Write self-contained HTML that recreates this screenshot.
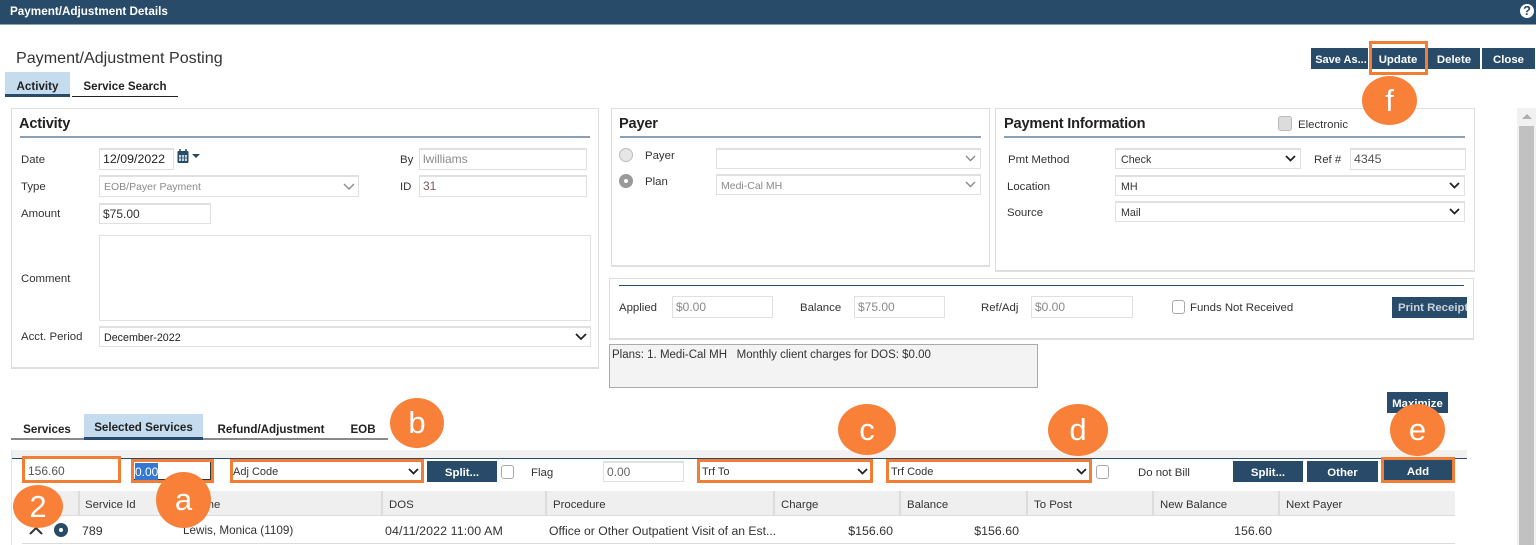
<!DOCTYPE html>
<html lang="en"><head><meta charset="utf-8"><title>Payment/Adjustment Details</title>
<style>
html,body{margin:0;padding:0;background:#fff;}
body{width:1536px;height:545px;position:relative;overflow:hidden;font-family:"Liberation Sans",sans-serif;font-size:11.4px;color:#333;}
div,span.t{position:absolute;box-sizing:border-box;white-space:nowrap;}
.t{line-height:18px;height:18px;}
.box{border:1px solid #dedede;border-bottom-width:2px;background:#fff;}
.h{font-size:14.6px;font-weight:bold;color:#222;line-height:20px;height:20px;letter-spacing:-.2px;}
.rule{height:2px;background:#8ba0b3;}
.in{border:1px solid #e0e0e0;border-top-width:2px;background:#fff;line-height:19px;padding-left:3px;color:#333;overflow:hidden;font-size:12px;}
.dis{color:#8a8a8a;}
.sel{font-size:10.7px;padding-left:4px;line-height:20px;}
.btn{background:#274b69;color:#fff;font-weight:bold;text-align:center;line-height:24px;height:21px;overflow:hidden;}
.o{border:3px solid #f27e36;}
.os{font-size:11px;line-height:21px;}
.c{background:#f98038;border-radius:50%;color:#fff;font-size:31px;text-align:center;font-family:"Liberation Sans",sans-serif;}
.tab{font-weight:bold;color:#222;text-align:center;font-size:11.6px;}
.th{height:25px;top:491px;border-left:2px solid #dcdcdc;}
.cb{border:1px solid #aaa;border-radius:3px;width:13px;height:14px;background:#fff;}
svg{position:absolute;overflow:visible;}
.hd{top:496px;color:#333;}
.td{top:522px;color:#333;font-size:11.7px;}
.num{font-size:12.4px;}
</style></head><body>

<div style="left:0;top:0;width:1536px;height:25px;background:#274b69;border-bottom:1px solid #8ba0b3"></div>
<div class="t" style="left:10px;top:3px;color:#fff;font-weight:bold;font-size:11.7px">Payment/Adjustment Details</div>
<div style="left:1520px;top:4px;width:14px;height:14px;border-radius:50%;background:#fff;color:#274b69;font-weight:bold;font-size:13px;line-height:14px;text-align:center">?</div>

<div class="t" style="left:16px;top:49px;font-size:16.1px;line-height:18px;height:18px;color:#333">Payment/Adjustment Posting</div>

<div class="btn" style="left:1311px;top:48px;width:57px;padding-left:3px;font-size:11px">Save As...</div>
<div class="btn" style="left:1370px;top:48px;width:56px">Update</div>
<div class="btn" style="left:1428px;top:48px;width:52px">Delete</div>
<div class="btn" style="left:1482px;top:48px;width:53px">Close</div>
<div class="o" style="left:1369px;top:41px;width:59px;height:34px"></div>

<div style="left:5px;top:72px;width:65px;height:25px;background:#c5dcee;border-bottom:3px solid #274b69"></div>
<div class="t tab" style="left:5px;top:78px;width:65px">Activity</div>
<div style="left:72px;top:96px;width:106px;height:1px;background:#222"></div>
<div class="t tab" style="left:72px;top:78px;width:106px">Service Search</div>

<div style="left:1517px;top:108px;width:19px;height:18px;background:#f1f1f1"></div>
<div style="left:1522px;top:114px;width:0;height:0;border:5px solid transparent;border-top:0;border-bottom:5px solid #b0b0b0"></div>
<div style="left:1517px;top:126px;width:19px;height:419px;background:#f1f1f1"></div>
<div style="left:1519px;top:126px;width:15px;height:419px;background:#c1c1c1"></div>

<!-- Activity -->
<div class="box" style="left:11px;top:108px;width:588px;height:261px"></div>
<div class="h" style="left:19px;top:114px">Activity</div>
<div class="rule" style="left:20px;top:136px;width:570px"></div>
<div class="t" style="left:21px;top:151px">Date</div>
<div class="in num" style="left:99px;top:148px;width:75px;height:22px;color:#222">12/09/2022</div>
<svg style="left:177px;top:149px" width="13" height="15" viewBox="0 0 13 15"><path d="M3 0v3M9 0v3" stroke="#274b69" stroke-width="1.5"/><rect x=".5" y="2" width="11" height="12" rx="1" fill="#274b69"/><rect x="2" y="6" width="8" height="6" fill="#c7d3dd"/><path d="M4.500 6v6M7.500 6v6M2 9h8" stroke="#274b69" stroke-width=".8"/></svg>
<div style="left:192px;top:154px;width:0;height:0;border:4px solid transparent;border-bottom:0;border-top:4px solid #274b69"></div>
<div class="t" style="left:400px;top:151px">By</div>
<div class="in dis" style="left:419px;top:148px;width:168px;height:22px">lwilliams</div>
<div class="t" style="left:21px;top:178px">Type</div>
<div class="in dis" style="left:99px;top:175px;width:260px;height:22px;font-size:10.5px;padding-left:4px;line-height:20px">EOB/Payer Payment</div>
<svg style="left:343px;top:183px" width="12" height="7"><path d="M1 1l5 5 5-5" fill="none" stroke="#8a8a8a" stroke-width="1.4"/></svg>
<div class="t" style="left:400px;top:178px">ID</div>
<div class="in" style="left:419px;top:175px;width:168px;height:22px;color:#7a5a5a">31</div>
<div class="t" style="left:21px;top:205px">Amount</div>
<div class="in" style="left:99px;top:203px;width:112px;height:21px">$75.00</div>
<div class="t" style="left:21px;top:270px">Comment</div>
<div class="in" style="left:99px;top:235px;width:492px;height:86px;border-top-width:1px"></div>
<div class="t" style="left:21px;top:328px">Acct. Period</div>
<div class="in sel" style="left:99px;top:326px;width:492px;height:21px;color:#222">December-2022</div>
<svg style="left:575px;top:333px" width="12" height="7"><path d="M1 1l5 5 5-5" fill="none" stroke="#222" stroke-width="1.8"/></svg>

<!-- Payer -->
<div class="box" style="left:611px;top:108px;width:379px;height:159px"></div>
<div class="h" style="left:619px;top:114px">Payer</div>
<div class="rule" style="left:620px;top:136px;width:361px"></div>
<div style="left:619px;top:148px;width:14px;height:14px;border-radius:50%;background:#e6e6e6;border:1px solid #bbb"></div>
<div class="t" style="left:645px;top:147px">Payer</div>
<div class="in" style="left:716px;top:148px;width:265px;height:21px"></div>
<svg style="left:965px;top:155px" width="11" height="7"><path d="M1 1l4.500 4.500 4.500-4.500" fill="none" stroke="#8a8a8a" stroke-width="1.4"/></svg>
<div style="left:619px;top:174px;width:14px;height:14px;border-radius:50%;background:#9a9a9a"></div>
<div style="left:624px;top:179px;width:4px;height:4px;border-radius:50%;background:#fff"></div>
<div class="t" style="left:645px;top:173px">Plan</div>
<div class="in dis" style="left:716px;top:174px;width:265px;height:21px;font-size:10.5px;padding-left:4px;line-height:20px">Medi-Cal MH</div>
<svg style="left:965px;top:181px" width="11" height="7"><path d="M1 1l4.500 4.500 4.500-4.500" fill="none" stroke="#8a8a8a" stroke-width="1.4"/></svg>

<!-- Payment Information -->
<div class="box" style="left:995px;top:108px;width:480px;height:164px"></div>
<div class="h" style="left:1004px;top:114px">Payment Information</div>
<div style="left:1278px;top:116px;width:14px;height:15px;border-radius:3px;background:#dcdcdc;border:1px solid #bbb"></div>
<div class="t" style="left:1298px;top:116px">Electronic</div>
<div class="rule" style="left:1004px;top:136px;width:461px"></div>
<div class="t" style="left:1008px;top:151px">Pmt Method</div>
<div class="in sel" style="left:1115px;top:148px;width:186px;height:21px;padding-left:5px">Check</div>
<svg style="left:1285px;top:155px" width="11" height="7"><path d="M1 1l4.500 4.500 4.500-4.500" fill="none" stroke="#222" stroke-width="1.8"/></svg>
<div class="t" style="left:1314px;top:151px">Ref #</div>
<div class="in num" style="left:1350px;top:148px;width:116px;height:22px;color:#555">4345</div>
<div class="t" style="left:1007px;top:178px">Location</div>
<div class="in sel" style="left:1115px;top:175px;width:350px;height:21px;padding-left:5px">MH</div>
<svg style="left:1449px;top:182px" width="11" height="7"><path d="M1 1l4.500 4.500 4.500-4.500" fill="none" stroke="#222" stroke-width="1.8"/></svg>
<div class="t" style="left:1007px;top:204px">Source</div>
<div class="in sel" style="left:1115px;top:201px;width:350px;height:21px;padding-left:5px">Mail</div>
<svg style="left:1449px;top:208px" width="11" height="7"><path d="M1 1l4.500 4.500 4.500-4.500" fill="none" stroke="#222" stroke-width="1.8"/></svg>

<!-- Summary -->
<div class="box" style="left:609px;top:278px;width:865px;height:62px"></div>
<div style="left:619px;top:285px;width:845px;height:1px;background:#274b69"></div>
<div class="t" style="left:619px;top:299px">Applied</div>
<div class="in dis" style="left:672px;top:296px;width:101px;height:22px;border-top-width:1px;line-height:20px">$0.00</div>
<div class="t" style="left:800px;top:299px">Balance</div>
<div class="in dis" style="left:854px;top:296px;width:91px;height:22px;border-top-width:1px;line-height:20px">$75.00</div>
<div class="t" style="left:981px;top:299px">Ref/Adj</div>
<div class="in dis" style="left:1031px;top:296px;width:102px;height:22px;border-top-width:1px;line-height:20px">$0.00</div>
<div class="cb" style="left:1172px;top:300px"></div>
<div class="t" style="left:1190px;top:299px">Funds Not Received</div>
<div class="btn" style="left:1392px;top:297px;width:75px;text-align:left;padding-left:6px;color:#c9d3dc;line-height:22px">Print Receipt</div>

<div style="left:609px;top:344px;width:429px;height:44px;background:#f3f3f3;border:1px solid #aaa"></div>
<div class="t" style="left:612px;top:346px;font-size:11.5px;color:#333">Plans: 1. Medi-Cal MH &nbsp; Monthly client charges for DOS: $0.00</div>

<div class="btn" style="left:1387px;top:392px;width:61px">Maximize</div>

<!-- Bottom tabs -->
<div style="left:11px;top:438px;width:377px;height:2px;background:#8a8a8a"></div>
<div class="t tab" style="left:11px;top:421px;width:72px">Services</div>
<div style="left:84px;top:414px;width:119px;height:26px;background:#c5dcee;border-bottom:3px solid #274b69"></div>
<div class="t tab" style="left:84px;top:419px;width:119px">Selected Services</div>
<div class="t tab" style="left:204px;top:421px;width:134px">Refund/Adjustment</div>
<div class="t tab" style="left:338px;top:421px;width:50px">EOB</div>

<div style="left:11px;top:450px;width:1456px;height:8px;background:#f1f1f1"></div>
<div style="left:11px;top:458px;width:1456px;height:1px;background:#274b69"></div>
<div style="left:11px;top:450px;width:1px;height:95px;background:#e4e4e4"></div>

<!-- Entry row -->
<div class="in o" style="left:22px;top:456px;width:99px;height:27px;padding-left:3px;line-height:25px;color:#555">156.60</div>
<div class="o" style="left:131px;top:459px;width:83px;height:24px;background:#fff"></div>
<div style="left:134px;top:462px;width:77px;height:18px;border:1px solid #333;border-left:0;border-top:0"></div>
<div class="t" style="left:135px;top:463px;height:17px;background:#3478d4;color:#fff;font-size:12px">0.00</div>
<div class="in o os" style="left:230px;top:459px;width:194px;height:24px;padding-left:0">Adj Code</div>
<svg style="left:408px;top:468px" width="11" height="7"><path d="M1 1l4.500 4.500 4.500-4.500" fill="none" stroke="#222" stroke-width="1.8"/></svg>
<div class="btn" style="left:427px;top:461px;width:70px">Split...</div>
<div class="cb" style="left:501px;top:465px"></div>
<div class="t" style="left:531px;top:464px">Flag</div>
<div class="in" style="left:603px;top:461px;width:81px;height:21px;color:#666;padding-left:3px">0.00</div>
<div class="in o os" style="left:697px;top:459px;width:176px;height:24px;padding-left:2px">Trf To</div>
<svg style="left:857px;top:468px" width="11" height="7"><path d="M1 1l4.500 4.500 4.500-4.500" fill="none" stroke="#222" stroke-width="1.8"/></svg>
<div class="in o os" style="left:886px;top:459px;width:206px;height:24px;padding-left:2px">Trf Code</div>
<svg style="left:1076px;top:468px" width="11" height="7"><path d="M1 1l4.500 4.500 4.500-4.500" fill="none" stroke="#222" stroke-width="1.8"/></svg>
<div class="cb" style="left:1096px;top:465px"></div>
<div class="t" style="left:1138px;top:464px">Do not Bill</div>
<div class="btn" style="left:1233px;top:461px;width:70px">Split...</div>
<div class="btn" style="left:1307px;top:461px;width:71px">Other</div>
<div class="btn" style="left:1381px;top:457px;width:74px;height:26px;line-height:24px;border:3px solid #f27e36">Add</div>

<!-- Table -->
<div style="left:22px;top:491px;width:1433px;height:25px;background:#efefef;border-bottom:1px solid #dcdcdc"></div>
<div class="th" style="left:78px"></div><div class="th" style="left:381px"></div><div class="th" style="left:545px"></div><div class="th" style="left:773px"></div><div class="th" style="left:899px"></div><div class="th" style="left:1026px"></div><div class="th" style="left:1152px"></div><div class="th" style="left:1278px"></div>
<div class="t hd" style="left:85px">Service Id</div>
<div class="t hd" style="left:190px">Name</div>
<div class="t hd" style="left:389px">DOS</div>
<div class="t hd" style="left:553px">Procedure</div>
<div class="t hd" style="left:781px">Charge</div>
<div class="t hd" style="left:907px">Balance</div>
<div class="t hd" style="left:1034px">To Post</div>
<div class="t hd" style="left:1160px">New Balance</div>
<div class="t hd" style="left:1286px">Next Payer</div>
<svg style="left:29px;top:525px" width="14" height="10"><path d="M1 9l6-6 6 6" fill="none" stroke="#333" stroke-width="2"/></svg>
<div style="left:54px;top:523px;width:14px;height:14px;border-radius:50%;background:#274b69"></div>
<div style="left:59px;top:528px;width:4px;height:4px;border-radius:50%;background:#fff"></div>
<div class="t td num" style="left:82px">789</div>
<div class="t td" style="left:183px">Lewis, Monica (1109)</div>
<div class="t td" style="left:385px;font-size:12.4px;letter-spacing:.1px">04/11/2022 11:00 AM</div>
<div class="t td" style="left:549px;font-size:12.2px">Office or Other Outpatient Visit of an Est...</div>
<div class="t td num" style="left:793px;width:100px;text-align:right;font-size:12.4px">$156.60</div>
<div class="t td num" style="left:919px;width:100px;text-align:right;font-size:12.4px">$156.60</div>
<div class="t td num" style="left:1172px;width:100px;text-align:right;font-size:12.4px">156.60</div>
<div style="left:22px;top:543px;width:1433px;height:1px;background:#dcdcdc"></div>

<!-- Callouts -->
<div class="c" style="left:1362px;top:76px;width:55px;height:49px;line-height:49px">f</div>
<div class="c" style="left:390px;top:398px;width:54px;height:50px;line-height:50px">b</div>
<div class="c" style="left:838px;top:404px;width:58px;height:51px;line-height:51px">c</div>
<div class="c" style="left:1048px;top:404px;width:60px;height:52px;line-height:52px">d</div>
<div class="c" style="left:1390px;top:404px;width:55px;height:52px;line-height:52px">e</div>
<div class="c" style="left:13px;top:485px;width:50px;height:43px;line-height:43px">2</div>
<div class="c" style="left:156px;top:472px;width:55px;height:56px;line-height:56px">a</div>
</body></html>
